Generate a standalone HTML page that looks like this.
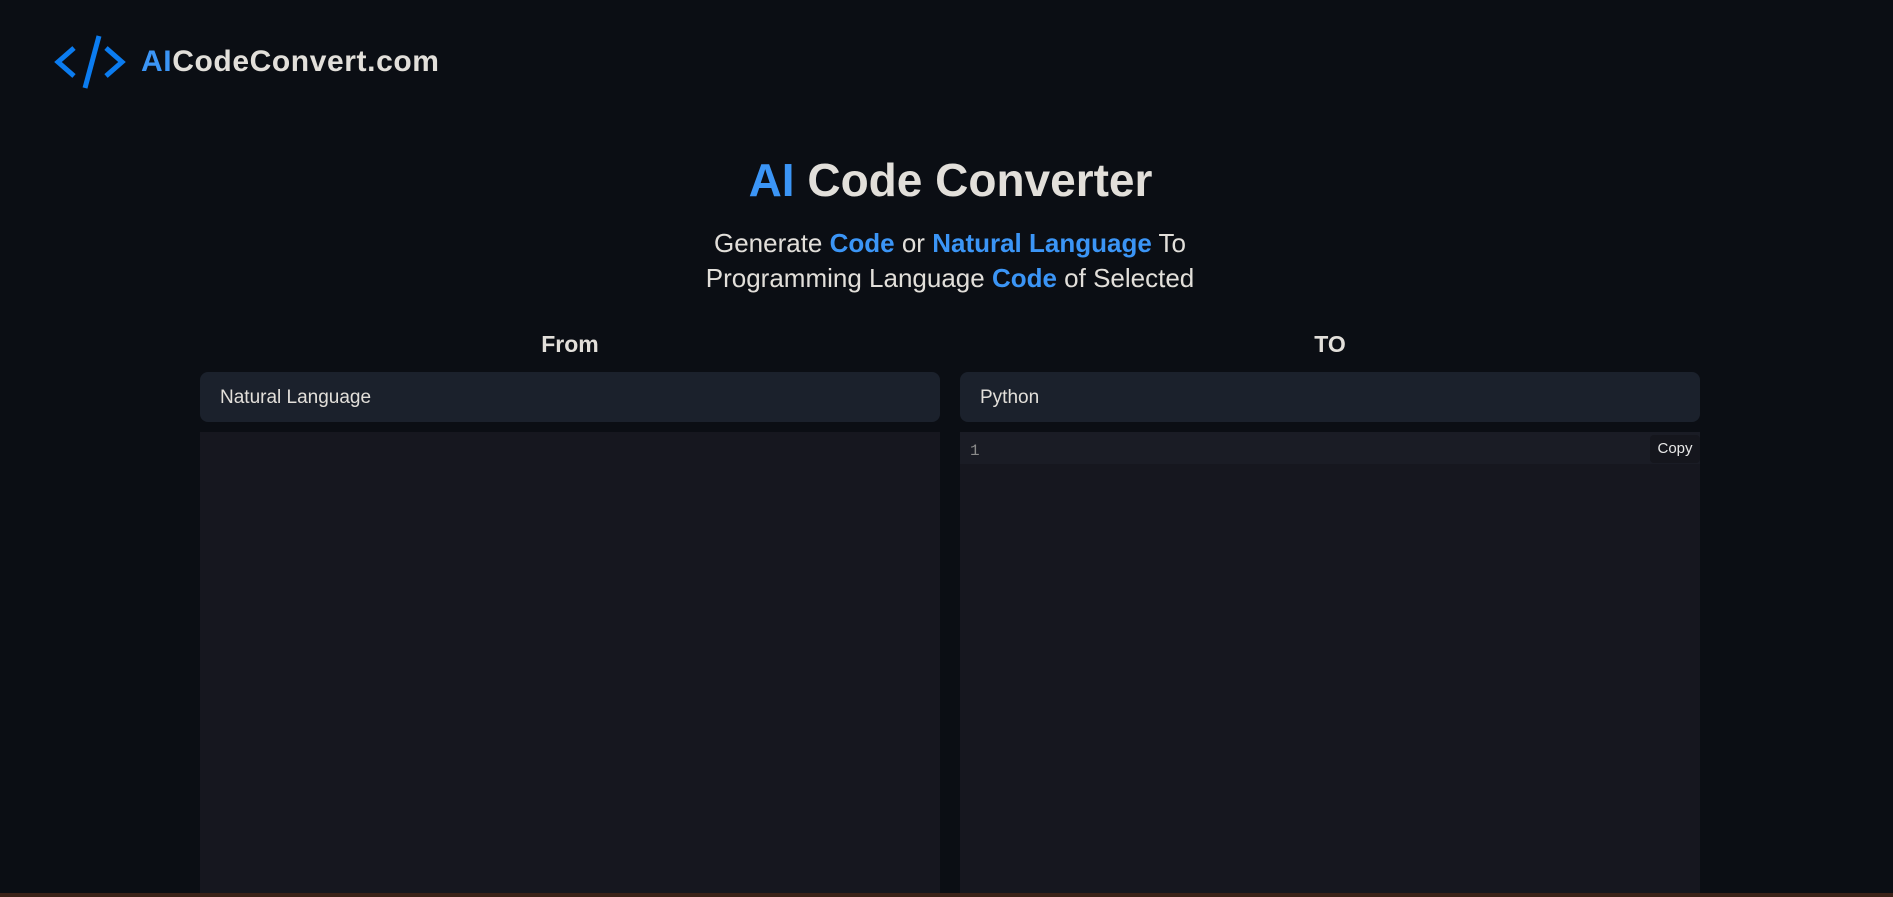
<!DOCTYPE html>
<html><head><meta charset="utf-8"><style>
*{margin:0;padding:0;box-sizing:border-box}
html,body{width:1893px;height:897px;overflow:hidden;background:#0b0e14;font-family:"Liberation Sans",sans-serif;color:#e2dfda}
.abs{position:absolute}
.b{color:#3b95f6}
.logo{left:141px;top:45px;font-size:30px;font-weight:bold;letter-spacing:0.6px}
.title{left:0;width:1893px;top:153px;text-align:center;font-size:46px;font-weight:bold;margin-left:4px}
.sub{left:0;width:1900px;top:226px;text-align:center;font-size:26px;line-height:35px}
.lbl{font-size:23px;font-weight:bold;top:331px;width:740px;text-align:center}
.sel{top:372px;height:50px;width:740px;background:#1b212c;border-radius:8px;font-size:19px;padding:15px 0 0 20px}
.ed{top:432px;height:461px;width:740px;background:#16171f}
</style></head><body>
<svg class="abs" style="left:54px;top:34px" width="72" height="56" viewBox="0 0 72 56">
<path d="M20 14 L4 28 L20 42" fill="none" stroke="#0b7cf0" stroke-width="5"/>
<path d="M52 14 L68 28 L52 42" fill="none" stroke="#0b7cf0" stroke-width="5"/>
<path d="M45 2 L31 54" fill="none" stroke="#0b7cf0" stroke-width="5"/>
</svg>
<div class="abs logo"><span class="b">AI</span>CodeConvert.com</div>
<div class="abs title"><span class="b">AI</span> Code Converter</div>
<div class="abs sub">Generate <b class="b">Code</b> or <b class="b">Natural Language</b> To<br>Programming Language <b class="b">Code</b> of Selected</div>
<div class="abs lbl" style="left:200px">From</div>
<div class="abs lbl" style="left:960px">TO</div>
<div class="abs sel" style="left:200px">Natural Language</div>
<div class="abs sel" style="left:960px">Python</div>
<div class="abs ed" style="left:200px"></div>
<div class="abs ed" style="left:960px">
<div style="position:absolute;left:0;top:0;width:740px;height:32px;background:#1a1c25"></div>
<div style="position:absolute;left:10px;top:10px;font-family:'Liberation Mono',monospace;font-size:16px;color:#8a8a8a">1</div>
<div style="position:absolute;right:0;top:3px;width:50px;height:28px;background:#15161d;border-radius:4px;color:#e8e8e8;font-size:15px;text-align:center;line-height:28px">Copy</div>
</div>
<div class="abs" style="left:0;top:893px;width:1893px;height:4px;background:#3b2218"></div>
</body></html>
